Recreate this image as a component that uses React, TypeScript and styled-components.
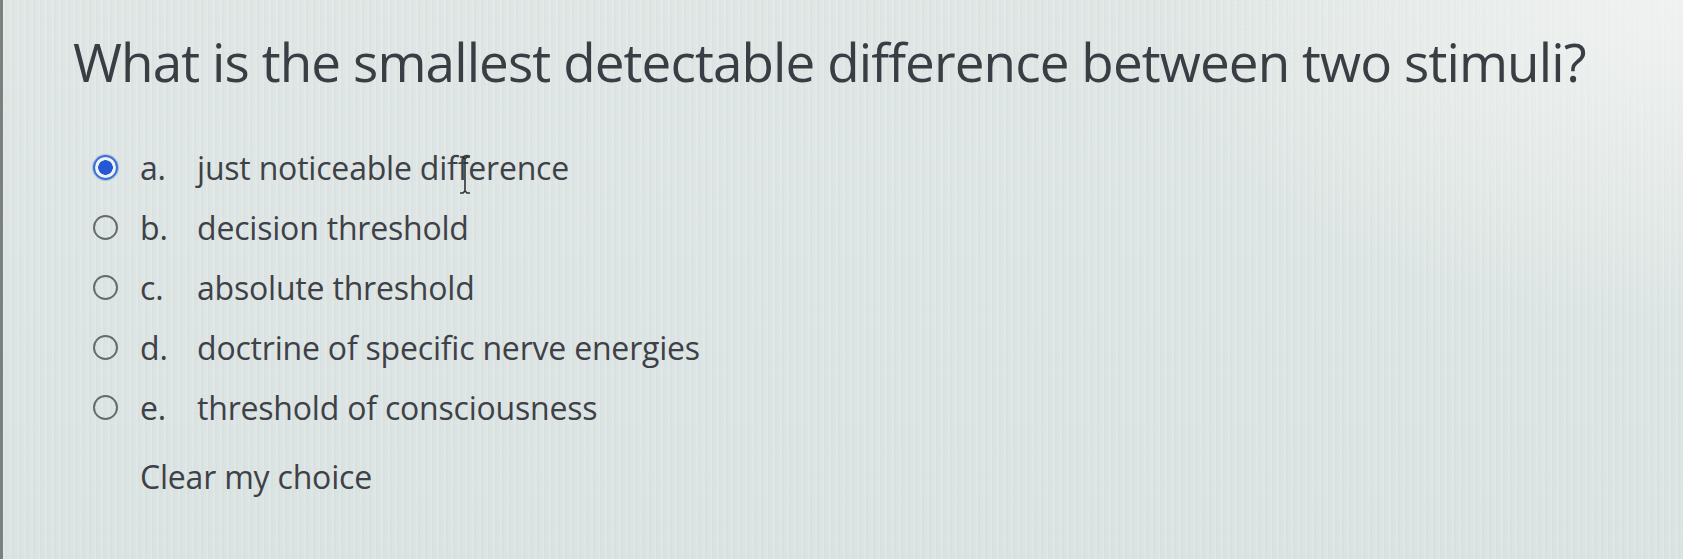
import styled, { createGlobalStyle } from 'styled-components';

const GlobalStyle = createGlobalStyle`
  html, body {
    margin: 0;
    padding: 0;
  }
  body {
    width: 1683px;
    height: 559px;
    overflow: hidden;
    background-color: #dde6e4;
    font-family: 'Open Sans', 'Noto Sans', sans-serif;
  }
`;

const Screen = styled.div`
  position: relative;
  box-sizing: border-box;
  width: 1683px;
  height: 559px;
  padding: 28px 0 0 70px;
  border-left: 3px solid #7a807e;
  background:
    radial-gradient(ellipse 760px 460px at 100% 0%, rgba(244, 245, 243, 0.8), rgba(244, 245, 243, 0) 70%),
    repeating-linear-gradient(90deg, rgba(255, 255, 255, 0.12) 0 2px, rgba(190, 205, 205, 0.1) 2px 4px, rgba(255, 255, 255, 0) 4px 7px),
    repeating-linear-gradient(0deg, rgba(230, 210, 225, 0.08) 0 3px, rgba(255, 255, 255, 0) 3px 6px),
    linear-gradient(180deg, #dfe7e5 0%, #dae4e2 100%);
`;

const Question = styled.h1`
  margin: 0 0 42px 0;
  font-size: 53px;
  line-height: 67px;
  font-weight: 400;
  color: #3a3d43;
  letter-spacing: -0.9px;
  white-space: nowrap;
`;

const Answers = styled.div`
  display: flex;
  flex-direction: column;
  padding-left: 20px;
`;

const Option = styled.label`
  display: flex;
  align-items: center;
  height: 60px;
  font-size: 32px;
  letter-spacing: -0.2px;
  color: #3e4147;
  cursor: pointer;
`;

const Radio = styled.span<{ $checked?: boolean }>`
  box-sizing: border-box;
  flex: 0 0 auto;
  width: 25px;
  height: 25px;
  border-radius: 50%;
  margin-right: 22px;
  border: 2.5px solid ${(p) => (p.$checked ? '#3b6fd6' : '#676b71')};
  background: ${(p) => (p.$checked ? 'radial-gradient(circle, #2458d4 0 7px, #eef2f6 7.5px 10px)' : 'transparent')};
  box-shadow: ${(p) => (p.$checked ? '0 0 0 1px rgba(60, 110, 210, 0.3)' : 'none')};
`;

const Letter = styled.span`
  width: 57px;
  flex: 0 0 auto;
`;

const Answer = styled.span`
  white-space: nowrap;
`;

const Clear = styled.div`
  margin: 9px 0 0 67px;
  height: 60px;
  display: flex;
  align-items: center;
  font-size: 32px;
  letter-spacing: -0.2px;
  color: #3e4147;
`;

const Caret = styled.svg`
  position: absolute;
  left: 455px;
  top: 156px;
`;

const options = [
  { letter: 'a.', text: 'just noticeable difference', checked: true },
  { letter: 'b.', text: 'decision threshold' },
  { letter: 'c.', text: 'absolute threshold' },
  { letter: 'd.', text: 'doctrine of specific nerve energies' },
  { letter: 'e.', text: 'threshold of consciousness' },
];

export default function App() {
  return (
    <>
      <GlobalStyle />
      <Screen>
        <Question>What is the smallest detectable difference between two stimuli?</Question>
        <Answers>
          {options.map((o) => (
            <Option key={o.letter}>
              <Radio $checked={o.checked} />
              <Letter>{o.letter}</Letter>
              <Answer>{o.text}</Answer>
            </Option>
          ))}
        </Answers>
        <Clear>Clear my choice</Clear>
        {/* text cursor resting over the first answer */}
        <Caret width="14" height="38" viewBox="0 0 14 38">
          <path d="M2 1h3l2 2 2-2h3M7 3v32M2 37h3l2-2 2 2h3" fill="none" stroke="#2d3036" strokeWidth="1.6" />
        </Caret>
      </Screen>
    </>
  );
}
